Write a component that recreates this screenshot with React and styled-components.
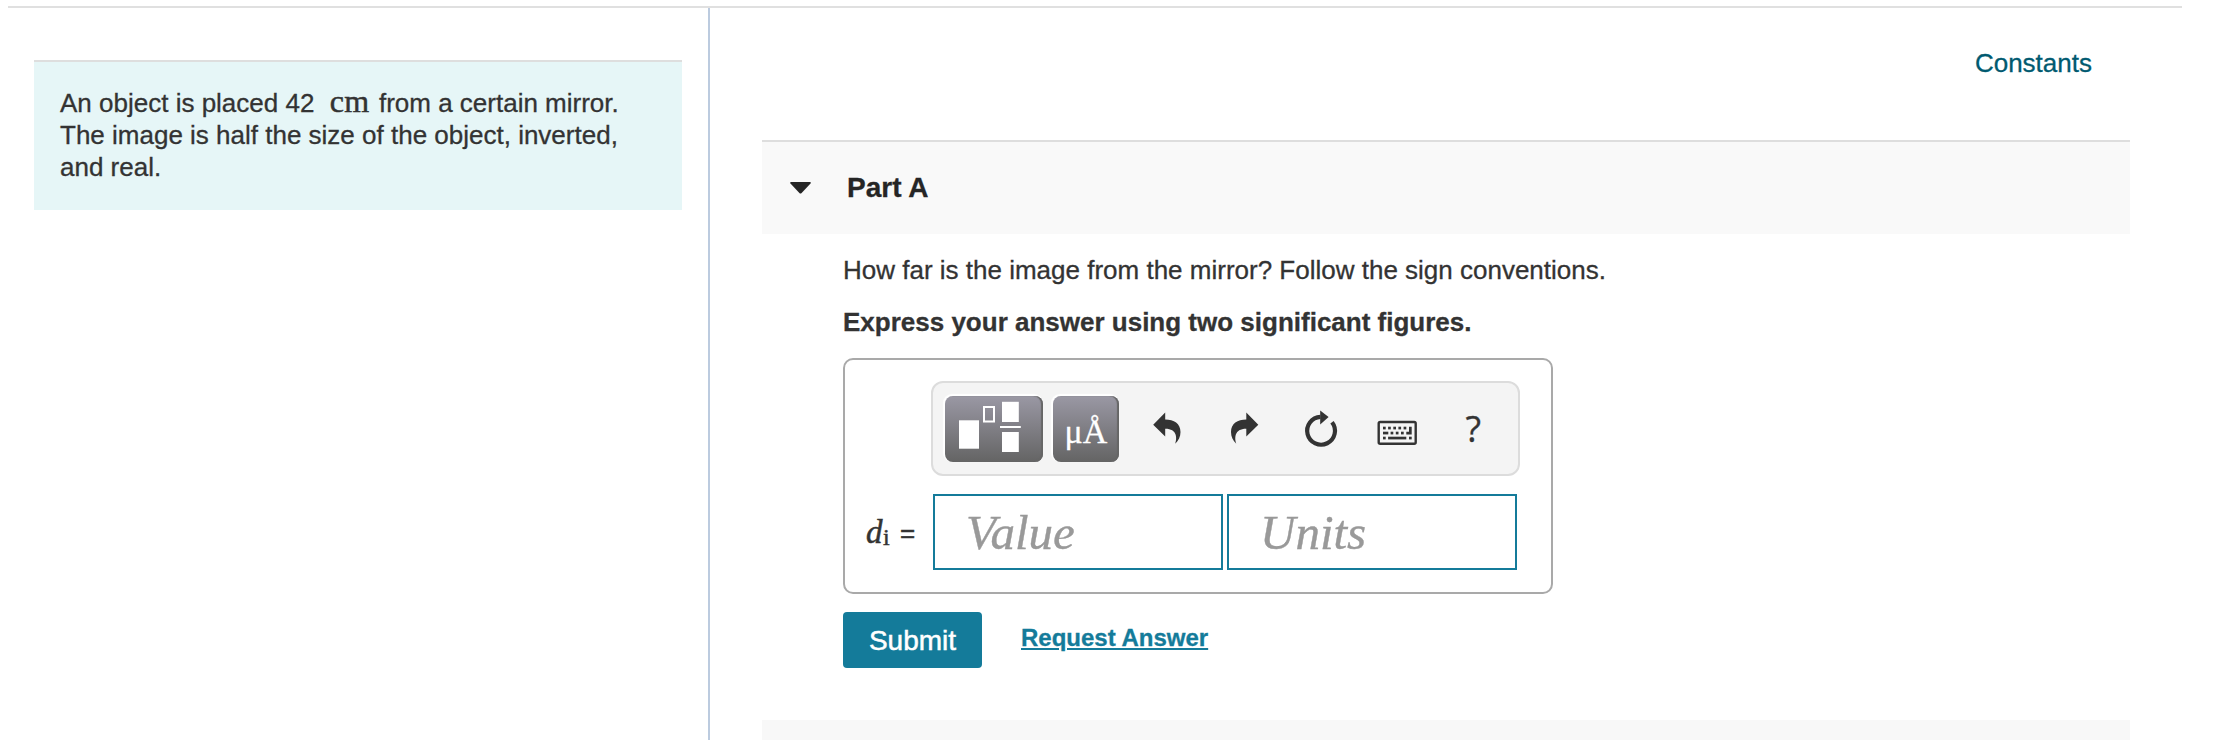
import React from 'react';
import styled, { createGlobalStyle } from 'styled-components';

const GlobalStyle = createGlobalStyle`
    * {
        box-sizing: border-box;
    }

    body {
        margin: 0;
        overflow: hidden;
        background: #fff;
        color: #333;
        font-family: "Liberation Sans", Arial, sans-serif;
        font-size: 26px;
        line-height: 32px;
        -webkit-text-stroke: 0.3px;
    }
`;

const Page = styled.div`
    display: flex;
    flex-direction: column;
    height: 740px;
    padding-top: 6px;
    overflow: hidden;
`;

const TopRule = styled.div`
    flex: none;
    height: 2px;
    margin: 0 36px 0 8px;
    background: #e0e0e0;
`;

const Columns = styled.div`
    display: flex;
    flex: 1;
    min-height: 0;
`;

const Sidebar = styled.aside`
    flex: none;
    width: 710px;
    padding: 52px 26px 0 34px;
    border-right: 2px solid #bccbdf;
`;

const Intro = styled.div`
    height: 150px;
    padding: 25px 26px 0;
    border-top: 2px solid #dedede;
    background: #e6f6f7;
`;

const IntroLine = styled.div`
    white-space: nowrap;
`;

const MathUnit = styled.span`
    margin: 0 2px 0 8px;
    font-family: "Liberation Serif", "Times New Roman", serif;
    font-size: 32px;
    letter-spacing: 0.5px;
    line-height: 0;
    -webkit-text-stroke: 0.5px;
`;

const Main = styled.main`
    flex: 1;
    padding: 39px 88px 0 52px;
`;

const Constants = styled.a`
    display: block;
    padding-right: 38px;
    color: #005a70;
    text-align: right;
`;

const PartHeader = styled.div`
    display: flex;
    align-items: center;
    gap: 36px;
    height: 94px;
    margin-top: 61px;
    padding-left: 28px;
    border-top: 2px solid #dedede;
    background: #f9f9f9;
    color: #252525;
    font-size: 28px;
    font-weight: bold;
`;

const PartBody = styled.section`
    padding: 20px 0 0 81px;
`;

const Question = styled.div`
    margin-bottom: 20px;
    font-weight: ${props => (props.$bold ? 'bold' : 'normal')};
    white-space: nowrap;
`;

const AnswerBox = styled.div`
    width: 710px;
    height: 236px;
    padding: 21px 0 0 20px;
    border: 2px solid #a9a9a9;
    border-radius: 10px;
    background: #fff;
`;

const Toolbar = styled.div`
    display: flex;
    align-items: center;
    width: 589px;
    height: 95px;
    margin-left: 66px;
    padding: 1px 0 0 12px;
    border: 2px solid #dcdcdc;
    border-radius: 12px;
    background: #f4f4f4;
`;

const PaletteButton = styled.button`
    flex: none;
    width: ${props => props.$width}px;
    height: 66px;
    margin: 0 10px 0 0;
    padding: 0;
    border: 0;
    border-radius: 8px;
    background: linear-gradient(#9a98a4, #646464);
    box-shadow: -1px -1px 1px 1px #fff, inset -2px 0 1px #666;
    color: #fff;
    font-family: "Liberation Serif", "Times New Roman", serif;
    font-size: 34px;
    line-height: 72px;

    svg {
        display: block;
    }
`;

const ToolButton = styled.button`
    display: flex;
    flex: none;
    align-items: center;
    justify-content: center;
    width: 76.5px;
    height: 66px;
    padding: 0 0 2px;
    border: 0;
    background: none;
    color: #333;
    font-family: "Open Sans", "Noto Sans", sans-serif;
    font-size: 36px;

    svg {
        margin-top: 1px;
    }
`;

const AnswerRow = styled.div`
    display: flex;
    gap: 4px;
    margin-top: 18px;
`;

const Variable = styled.label`
    display: flex;
    align-items: center;
    width: 64px;
    height: 76px;
    padding-left: 1px;
    font-family: "Liberation Serif", "Times New Roman", serif;
    font-size: 33px;
    -webkit-text-stroke: 0.5px;

    i {
        width: 17px;
    }

    sub {
        position: relative;
        top: 5px;
        width: 17px;
        font-size: 24px;
        vertical-align: baseline;
    }

    span {
        padding-top: 2px;
        font-family: "Liberation Sans", Arial, sans-serif;
        font-size: 26px;
    }
`;

const Field = styled.input`
    width: 290px;
    height: 76px;
    padding: 0 0 0 31px;
    border: 2px solid #147b9a;
    border-radius: 0;
    background: #fff;
    font-family: "Liberation Serif", "Times New Roman", serif;
    font-size: 49px;
    font-style: italic;
    -webkit-text-stroke: 0.4px;

    &::placeholder {
        color: #999;
        opacity: 1;
    }
`;

const Actions = styled.div`
    display: flex;
    align-items: center;
    gap: 39px;
    margin-top: 18px;
`;

const SubmitButton = styled.button`
    width: 139px;
    height: 56px;
    padding: 2px 0 0;
    border: 0;
    border-radius: 4px;
    background: #147b9a;
    color: #fff;
    font-family: inherit;
    font-size: 28px;
    -webkit-text-stroke: 0.5px;
`;

const RequestLink = styled.a`
    padding-bottom: 4px;
    color: #147b9a;
    font-size: 24px;
    font-weight: bold;
    text-decoration: underline;
    text-decoration-thickness: 1.5px;
    text-underline-offset: 2px;
`;

const NextPart = styled.div`
    height: 60px;
    margin-top: 52px;
    background: #f8f8f8;
`;

const Caret = () => (
    <svg width="21" height="12" viewBox="0 0 21 12" fill="#252525">
        <path d="M1 0h19q1.3.4.5 1.4L11.4 11.2q-.9.8-1.8 0L.5 1.4Q-.3.4 1 0z" />
    </svg>
);

const TemplatesIcon = () => (
    <svg width="98" height="66" viewBox="0 0 98 66" fill="#fff">
        <rect x="14" y="24.3" width="20" height="28.4" />
        <rect x="39" y="11" width="10" height="14.5" fill="none" stroke="#fff" strokeWidth="2" />
        <rect x="57" y="5.8" width="16.8" height="20.2" />
        <rect x="55" y="30" width="20.8" height="2" />
        <rect x="57" y="36" width="16.8" height="20" />
    </svg>
);

const ARROW = 'M6.2 15.8 18.2 3.5v7c8.8 0 15.3 4 15.3 12.5 0 5-2 8.5-5.3 11.8 1.8-5.3 2.3-15-10-15v7.7z';

const UndoIcon = () => (
    <svg width="40" height="40" viewBox="0 0 40 40" fill="#333">
        <path d={ARROW} />
    </svg>
);

const RedoIcon = () => (
    <svg width="40" height="40" viewBox="0 0 40 40" fill="#333">
        <path d={ARROW} transform="matrix(-1 0 0 1 40.5 0)" />
    </svg>
);

const ResetIcon = () => (
    <svg width="40" height="40" viewBox="0 0 40 40">
        <path d="M32 13.2A13.9 13.9 0 1 1 20.5 7.9" fill="none" stroke="#333" strokeWidth="4.2" />
        <path d="M20.2 1.5 28.6 8.1 20.2 15.5z" fill="#333" />
    </svg>
);

const KeyboardIcon = () => (
    <svg width="40" height="40" viewBox="0 0 40 40">
        <rect x="1.7" y="13" width="37" height="21.7" rx="1.5" fill="none" stroke="#333" strokeWidth="2.4" />
        <g fill="#333" transform="translate(.3 -.5)">
            {[5.7, 10.8, 16, 21.1, 26.3].map(x => (
                <rect key={x} x={x} y="18.2" width="2.7" height="2.7" />
            ))}
            <path d="M31.7 18.2h2.7v7.7h-5.4v-2.7h2.7z" />
            <rect x="5.7" y="23.2" width="5.3" height="2.7" />
            {[13.3, 18.5, 23.7].map(x => (
                <rect key={x} x={x} y="23.2" width="2.7" height="2.7" />
            ))}
            <rect x="5.7" y="28.2" width="2.7" height="2.7" />
            <rect x="10.8" y="28.2" width="18.2" height="2.7" />
            <rect x="31.7" y="28.2" width="2.7" height="2.7" />
        </g>
    </svg>
);

const AnswerEditor = () => (
    <AnswerBox>
        <Toolbar>
            <PaletteButton $width={98}><TemplatesIcon /></PaletteButton>
            <PaletteButton $width={66}>μÅ</PaletteButton>
            <ToolButton><UndoIcon /></ToolButton>
            <ToolButton><RedoIcon /></ToolButton>
            <ToolButton><ResetIcon /></ToolButton>
            <ToolButton><KeyboardIcon /></ToolButton>
            <ToolButton>?</ToolButton>
        </Toolbar>
        <AnswerRow>
            <Variable>
                <i>d</i>
                <sub>i</sub>
                <span>=</span>
            </Variable>
            <Field placeholder="Value" />
            <Field placeholder="Units" />
        </AnswerRow>
    </AnswerBox>
);

const App = () => (
    <>
        <GlobalStyle />
        <Page>
            <TopRule />
            <Columns>
                <Sidebar>
                    <Intro>
                        <IntroLine>An object is placed 42 <MathUnit>cm</MathUnit> from a certain mirror.</IntroLine>
                        <IntroLine>The image is half the size of the object, inverted,</IntroLine>
                        <IntroLine>and real.</IntroLine>
                    </Intro>
                </Sidebar>
                <Main>
                    <Constants>Constants</Constants>
                    <PartHeader>
                        <Caret />
                        Part A
                    </PartHeader>
                    <PartBody>
                        <Question>How far is the image from the mirror? Follow the sign conventions.</Question>
                        <Question $bold>Express your answer using two significant figures.</Question>
                        <AnswerEditor />
                        <Actions>
                            <SubmitButton>Submit</SubmitButton>
                            <RequestLink>Request Answer</RequestLink>
                        </Actions>
                    </PartBody>
                    <NextPart />
                </Main>
            </Columns>
        </Page>
    </>
);

export default App;
